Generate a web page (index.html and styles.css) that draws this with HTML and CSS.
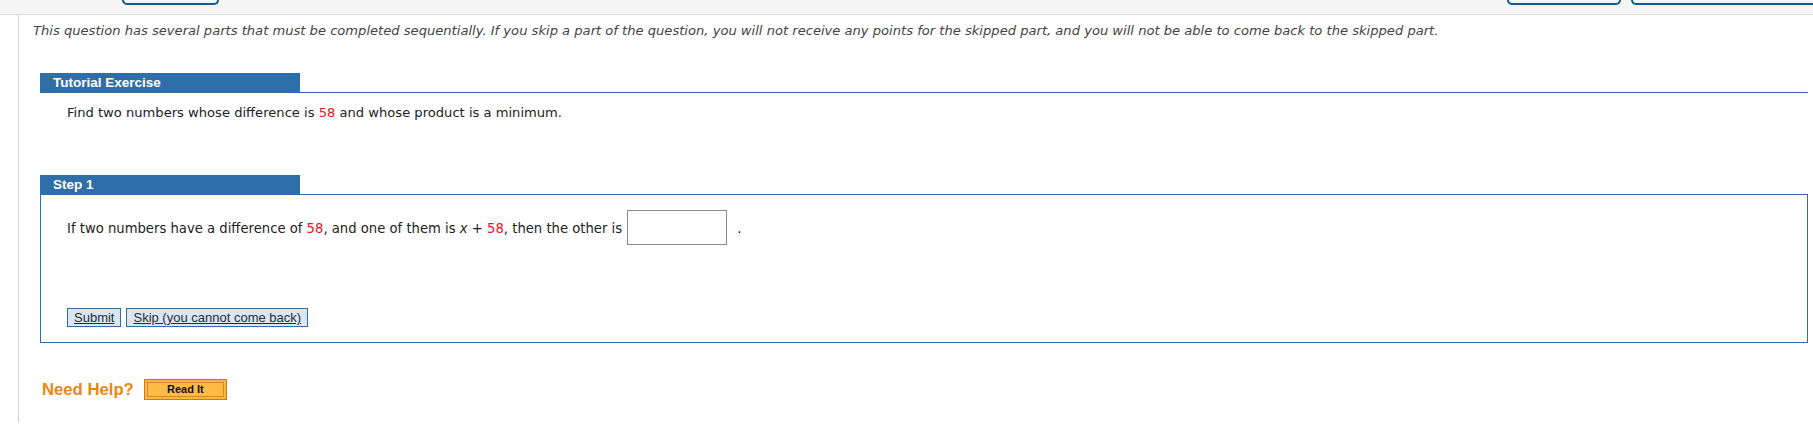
FILE: index.html
```html
<!DOCTYPE html>
<html>
<head>
<meta charset="utf-8">
<link rel="stylesheet" href="styles.css">
</head>
<body>
<div class="topbar">
  <div class="tab tab1"></div>
  <div class="tab tab2"></div>
  <div class="tab tab3"></div>
</div>
<div class="main">
  <p class="notice">This question has several parts that must be completed sequentially. If you skip a part of the question, you will not receive any points for the skipped part, and you will not be able to come back to the skipped part.</p>

  <div class="section tutorial">
    <div class="sechead"><div class="label">Tutorial Exercise</div></div>
    <p class="text problem">Find two numbers whose difference is <span class="red">58</span> and whose product is a minimum.</p>
  </div>

  <div class="section step">
    <div class="label">Step 1</div>
    <div class="stepbox">
      <div class="row text">
        <span class="q">If two numbers have a difference of <span class="red">58</span>, and one of them is <i>x</i> + <span class="red">58</span>, then the other is</span>
        <input class="answer" type="text">
        <span class="dot">.</span>
      </div>
      <div class="buttons">
        <button class="btn">Submit</button>
        <button class="btn">Skip (you cannot come back)</button>
      </div>
    </div>
  </div>

  <div class="section help">
    <span class="needhelp">Need Help?</span>
    <button class="readit"><span>Read It</span></button>
  </div>
</div>
</body>
</html>
```
FILE: styles.css
```css
html, body {
  margin: 0;
  padding: 0;
  background: #fff;
}
body {
  font-family: "DejaVu Sans", Verdana, sans-serif;
  color: #222;
  overflow: hidden;
}
.topbar {
  display: flex;
  align-items: flex-start;
  height: 14px;
  background: #f5f5f5;
  border-bottom: 1px solid #dcdcdc;
  overflow: hidden;
}
.tab {
  flex-shrink: 0;
  height: 3px;
  border: 2px solid #0f5c96;
  border-top: none;
  border-radius: 0 0 5px 5px;
  background: #f5f5f5;
}
.tab1 { margin-left: 122px; width: 93px; }
.tab2 { margin-left: 1288px; width: 110px; }
.tab3 { margin-left: 10px; width: 200px; }

.main {
  margin-left: 18px;
  border-left: 1px solid #d2d2d2;
  padding: 7px 5px 20px 14px;
  min-height: 380px;
}
.notice {
  margin: 0;
  font-style: italic;
  font-size: 13.1px;
  line-height: 17px;
  color: #444;
}
.section {
  margin-left: 7px;
}
.tutorial {
  margin-top: 34px;
}
.sechead {
  border-bottom: 1px solid #2f6ea8;
}
.label {
  width: 247px;
  height: 19px;
  padding-left: 13px;
  background: #2f6ea8;
  color: #fff;
  font-family: "Liberation Sans", Arial, sans-serif;
  font-weight: bold;
  font-size: 13.5px;
  line-height: 20px;
}
.text {
  font-size: 13.1px;
  line-height: 16px;
}
.row.text {
  font-size: 13.2px;
}
.problem {
  margin: 12px 0 0 27px;
}
.red { color: #e8141e; }
.step {
  margin-top: 54px;
}
.stepbox {
  border: 1px solid #2f6ea8;
  padding: 15px 0 15px 26px;
}
.row {
  display: flex;
  align-items: center;
  height: 35px;
}
.q { padding-top: 3px; }
.row i { font-style: italic; }
.answer {
  box-sizing: border-box;
  width: 100px;
  height: 35px;
  margin: 0 0 0 5px;
  border: 1px solid #8a8a8a;
  padding: 0;
  background: #fff;
}
.dot {
  margin-left: 10px;
  padding-top: 3px;
}
.buttons {
  display: flex;
  gap: 5px;
  margin-top: 63px;
}
.btn {
  box-sizing: border-box;
  height: 19px;
  margin: 0;
  padding: 0 6px;
  background: #dbe6f1;
  border: 1px solid #2f6ea8;
  border-radius: 0;
  font-family: "Liberation Sans", Arial, sans-serif;
  font-size: 13px;
  line-height: 17px;
  color: #1f2d3d;
  text-decoration: underline;
}
.help {
  display: flex;
  align-items: center;
  margin-top: 36px;
  margin-left: 9px;
}
.needhelp {
  font-family: "Liberation Sans", Arial, sans-serif;
  font-weight: bold;
  font-size: 16.7px;
  color: #ec870e;
}
.readit {
  box-sizing: border-box;
  width: 83px;
  height: 21px;
  margin: 0 0 0 10px;
  padding: 2px;
  background: #fbb63e;
  border: 1px solid #c8782a;
  border-radius: 0;
  display: flex;
}
.readit span {
  flex: 1;
  border: 1px solid #d98a24;
  background: #fdbb45;
  font-family: "Liberation Sans", Arial, sans-serif;
  font-weight: bold;
  font-size: 11px;
  line-height: 13px;
  color: #111;
  text-align: center;
}
```
